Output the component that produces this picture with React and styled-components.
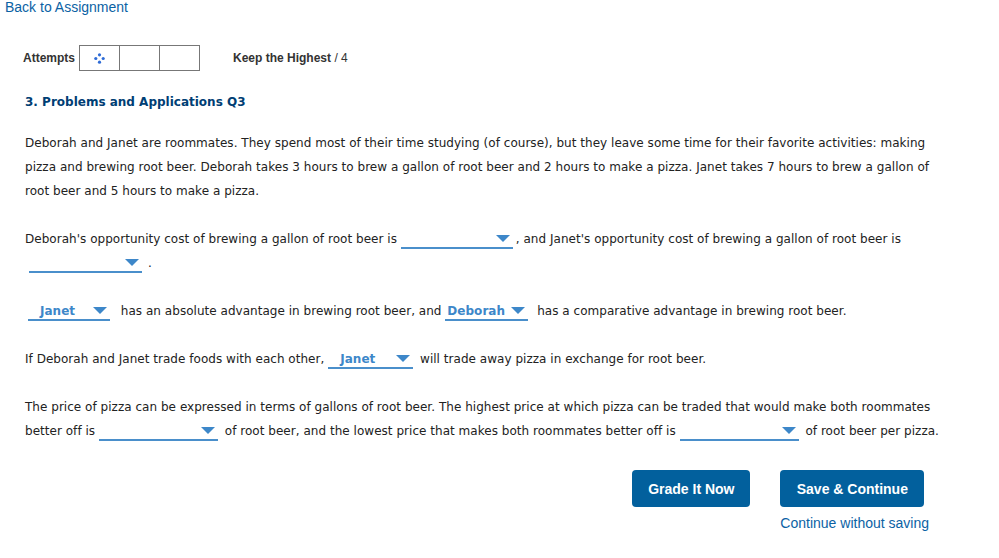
import styled, { createGlobalStyle } from "styled-components";

const GlobalStyle = createGlobalStyle`
  body {
    margin: 0;
    background: #ffffff;
    font-family: "DejaVu Sans", Verdana, sans-serif;
  }
`;

const StyledPage = styled.div`
  width: 999px;
  height: 558px;
  overflow: hidden;
`;

const StyledBackLink = styled.a`
  display: block;
  padding: 0 0 0 5px;
  height: 16px;
  line-height: 14px;
  font-family: "Liberation Sans", Arial, sans-serif;
  font-size: 14px;
  color: #0b62a4;
  text-decoration: none;
`;

const StyledAttemptsRow = styled.div`
  display: flex;
  align-items: center;
  margin: 29px 0 0 23px;
  height: 26px;
  font-family: "Liberation Sans", Arial, sans-serif;
  font-size: 12px;
  font-weight: 700;
  color: #333;
`;

const StyledAttemptsLabel = styled.span`
  margin-right: 4px;
`;

const StyledCells = styled.div`
  display: flex;
`;

const StyledAttemptCell = styled.div`
  width: 39px;
  height: 24px;
  border: 1px solid #777;
  margin-left: -1px;
  display: flex;
  align-items: center;
  justify-content: center;
  &:first-of-type {
    margin-left: 0;
  }
`;

const StyledKeep = styled.span`
  margin-left: 33px;
  span {
    font-weight: 400;
  }
`;

const StyledContent = styled.div`
  padding: 0 0 0 25px;
  font-family: "DejaVu Sans", Verdana, sans-serif;
  font-size: 12px;
  letter-spacing: 0.03px;
  color: #222;
  line-height: 24px;
`;

const StyledTitle = styled.h2`
  margin: 19px 0 0;
  font-size: 12px;
  font-weight: 700;
  letter-spacing: 0;
  color: #003e74;
  line-height: 24px;
`;

const StyledPara = styled.p`
  margin: ${(p) => p.$top || 24}px 0 0;
  width: ${(p) => p.$w || 912}px;
`;

const StyledSelect = styled.span`
  position: relative;
  display: inline-block;
  width: ${(p) => p.$w}px;
  box-sizing: border-box;
  line-height: 16px;
  border-bottom: 2px solid #4a8fcb;
  margin: ${(p) => p.$margin || "0 3px"};
  padding: 0 18px 0 ${(p) => p.$pl || 12}px;
  font-weight: 700;
  color: #3d87c9;
`;

const StyledArrow = styled.span`
  position: absolute;
  right: 3px;
  top: 4px;
  width: 0;
  height: 0;
  border-left: 7px solid transparent;
  border-right: 7px solid transparent;
  border-top: 7px solid #3d87c9;
`;

const StyledButtons = styled.div`
  display: flex;
  justify-content: flex-end;
  gap: 30px;
  margin: 27px 70px 0 0;
`;

const StyledColumn = styled.div`
  display: flex;
  flex-direction: column;
  align-items: flex-start;
`;

const StyledButton = styled.button`
  width: ${(p) => p.$w}px;
  height: 37px;
  padding: 0;
  border: none;
  border-radius: 4px;
  background: #02609d;
  color: #fff;
  font-family: "Liberation Sans", Arial, sans-serif;
  font-size: 14px;
  font-weight: 700;
`;

const StyledLink = styled.a`
  margin-top: 8px;
  font-family: "Liberation Sans", Arial, sans-serif;
  font-size: 14px;
  color: #0b62a4;
`;

const MoveIcon = () => (
  <svg width="11" height="11" viewBox="0 0 11 11">
    <g fill="#2e6bd6">
      <circle cx="5.5" cy="1.8" r="1.6" />
      <circle cx="5.5" cy="9.2" r="1.6" />
      <circle cx="1.8" cy="5.5" r="1.6" />
      <circle cx="9.2" cy="5.5" r="1.6" />
    </g>
  </svg>
);

const Select = ({ w, value, pl, margin }) => (
  <StyledSelect $w={w} $pl={pl} $margin={margin}>
    {value || "\u00a0"}
    <StyledArrow />
  </StyledSelect>
);

export default function App() {
  return (
    <StyledPage>
      <GlobalStyle />
      <StyledBackLink href="#">Back to Assignment</StyledBackLink>
      <StyledAttemptsRow>
        <StyledAttemptsLabel>Attempts</StyledAttemptsLabel>
        <StyledCells>
          <StyledAttemptCell>
            <MoveIcon />
          </StyledAttemptCell>
          <StyledAttemptCell />
          <StyledAttemptCell />
        </StyledCells>
        <StyledKeep>
          Keep the Highest <span>/ 4</span>
        </StyledKeep>
      </StyledAttemptsRow>
      <StyledContent>
        <StyledTitle>3. Problems and Applications Q3</StyledTitle>
        <StyledPara $top={17}>
          Deborah and Janet are roommates. They spend most of their time studying (of course), but
          they leave some time for their favorite activities: making pizza and brewing root beer.
          Deborah takes 3 hours to brew a gallon of root beer and 2 hours to make a pizza. Janet
          takes 7 hours to brew a gallon of root beer and 5 hours to make a pizza.
        </StyledPara>
        <StyledPara>
          Deborah's opportunity cost of brewing a gallon of root beer is{" "}
          <Select w={112} margin="0 3px 0 0" />, and Janet's opportunity cost of brewing a gallon
          of root beer is <br />
          <Select w={113} margin="0 6px 0 4px" />.
        </StyledPara>
        <StyledPara>
          <Select w={82} value="Janet" margin="0 7px 0 3px" /> has an absolute advantage in
          brewing root beer, and <Select w={83} value="Deborah" pl={2} margin="0 5px 0 0" /> has a
          comparative advantage in brewing root beer.
        </StyledPara>
        <StyledPara>
          If Deborah and Janet trade foods with each other,{" "}
          <Select w={85} value="Janet" margin="0 3px 0 0" /> will trade away pizza in exchange for
          root beer.
        </StyledPara>
        <StyledPara $w={960}>
          The price of pizza can be expressed in terms of gallons of root beer. The highest price at
          which pizza can be traded that would make both roommates <br />
          better off is <Select w={119} margin="0 3px 0 0" /> of root beer, and the lowest price
          that makes both roommates better off is <Select w={119} margin="0 3px 0 0" /> of root
          beer per pizza.
        </StyledPara>
      </StyledContent>
      <StyledButtons>
        <StyledColumn>
          <StyledButton $w={118}>Grade It Now</StyledButton>
        </StyledColumn>
        <StyledColumn>
          <StyledButton $w={144}>Save &amp; Continue</StyledButton>
          <StyledLink>Continue without saving</StyledLink>
        </StyledColumn>
      </StyledButtons>
    </StyledPage>
  );
}
